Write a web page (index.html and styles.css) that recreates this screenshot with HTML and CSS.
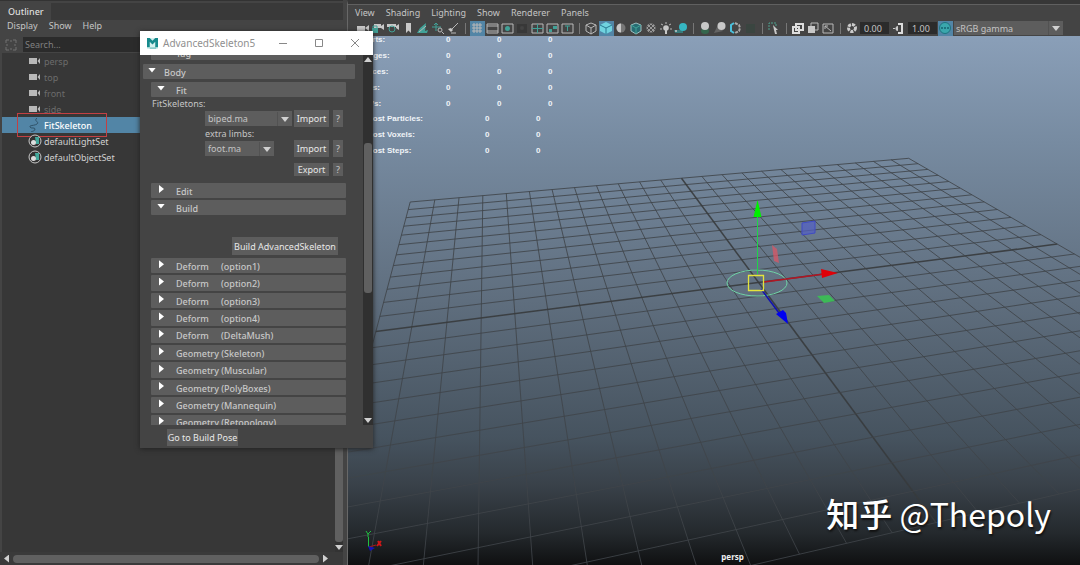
FILE: index.html
```html
<!DOCTYPE html>
<html lang="en">
<head>
<meta charset="utf-8">
<meta name="viewport" content="width=device-width, initial-scale=1">
<title>Outliner and perspective view</title>
<link rel="stylesheet" href="styles.css">
</head>
<body>
<div class="app">
  <aside class="outliner">
    <div class="tabs"><span class="tab">Outliner</span></div>
    <nav class="menu outliner-menu">
      <button>Display</button><button>Show</button><button>Help</button>
    </nav>
    <div class="search-row">
      <svg class="frame-icon" viewBox="0 0 12 12"><path d="M1 4V1h3M8 1h3v3M11 8v3H8M4 11H1V8M2 5v2M10 5v2M5 2h2M5 10h2"/></svg>
      <input class="search" type="text" placeholder="Search..." aria-label="Search">
    </div>
    <div class="tree-area">
      <ul class="tree">
        <li class="node dim"><svg class="node-icon" viewBox="0 0 14 14"><path class="cam" d="M1 4h8v6H1zM9.500 7L12 4v6z"/></svg>persp</li>
        <li class="node dim"><svg class="node-icon" viewBox="0 0 14 14"><path class="cam" d="M1 4h8v6H1zM9.500 7L12 4v6z"/></svg>top</li>
        <li class="node dim"><svg class="node-icon" viewBox="0 0 14 14"><path class="cam" d="M1 4h8v6H1zM9.500 7L12 4v6z"/></svg>front</li>
        <li class="node dim"><svg class="node-icon" viewBox="0 0 14 14"><path class="cam" d="M1 4h8v6H1zM9.500 7L12 4v6z"/></svg>side</li>
        <li class="node selected"><svg class="node-icon" viewBox="0 0 14 14"><path class="curve" d="M9 0C5 3 12 4 9 6S1 7 2 9s5 0 5 2-2 2-4 3"/></svg>FitSkeleton<span class="callout"></span></li>
        <li class="node"><svg class="node-icon" viewBox="0 0 14 14"><circle class="ring" cx="7" cy="7" r="6"/><path d="M7 3h4v7H8z" fill="#42a89b"/><circle cx="5.500" cy="8.500" r="2.500" fill="#ddd"/></svg>defaultLightSet</li>
        <li class="node"><svg class="node-icon" viewBox="0 0 14 14"><circle class="ring" cx="7" cy="7" r="6"/><path d="M7 3h4v7H8z" fill="#42a89b"/><circle cx="5.500" cy="8.500" r="2.500" fill="#ddd"/></svg>defaultObjectSet</li>
      </ul>
      <div class="vscroll"><span class="thumb"></span><i class="tri down"></i></div>
    </div>
    <div class="hscroll"><i class="tri left"></i><span class="thumb"></span><i class="tri right"></i></div>
  </aside>

  <main class="view">
    <nav class="menu view-menu">
      <button>View</button><button>Shading</button><button>Lighting</button><button>Show</button><button>Renderer</button><button>Panels</button>
    </nav>
    <div class="toolbar">
      <button class="tool" aria-label="Select camera"><svg viewBox="0 0 14 14"><path class="f" d="M1 5h8v5H1zM9 7l4-3v6z"/></svg></button>
      <button class="tool" aria-label="Lock camera"><svg viewBox="0 0 14 14"><path class="f" d="M3 3h7v4H3zM10 5l3-2v6l-3-2z"/><path class="t" d="M1 7h6v5H1z"/><path class="ts" d="M2 7V5h4v2"/></svg></button>
      <button class="tool" aria-label="Camera attributes"><svg viewBox="0 0 14 14"><path class="f" d="M1 3h9v3H1zM10 5l3-2v6l-3-2z"/><circle class="ts" cx="6" cy="8" r="3"/></svg></button>
      <button class="tool" aria-label="Bookmarks"><svg viewBox="0 0 14 14"><path class="f" d="M5 2h5v10L7.500 9.500 5 12z"/></svg></button>
      <button class="tool" aria-label="Image plane"><svg viewBox="0 0 14 14"><path class="t" d="M1 12L4 7l6-5-1 8 3-1-1 3z"/><path class="s" d="M3 11l7-6"/></svg></button>
      <button class="tool" aria-label="Pan and zoom"><svg viewBox="0 0 14 14"><path class="ts" d="M1 6h9M5 2v8M3 4l2-2 2 2"/><circle class="s" cx="9" cy="9" r="2"/><path class="s" d="M11 11l2 2"/></svg></button>
      <button class="tool" aria-label="Grease pencil"><svg viewBox="0 0 14 14"><path class="s" d="M12 2L5 9"/><path class="f" d="M2 8l3 3 2-2-2-2z"/><path class="s" d="M5 12h5"/></svg></button>
      <span class="sep"></span>
      <button class="tool on" aria-label="Grid"><svg viewBox="0 0 14 14"><path class="s" d="M2 4h10M2 7h10M2 10h10M4 2v10M7 2v10M10 2v10"/></svg></button>
      <button class="tool" aria-label="Film gate"><svg viewBox="0 0 14 14"><path class="s" d="M2 3h11v9H2zM2 5h11M2 10h11"/></svg></button>
      <button class="tool" aria-label="Resolution gate"><svg viewBox="0 0 14 14"><path class="s" d="M2 3h11v9H2z"/><circle class="t" cx="7.500" cy="7.500" r="2.500"/></svg></button>
      <button class="tool" aria-label="Gate mask" disabled><svg viewBox="0 0 14 14"><path d="M2 3h10v9H2z" fill="#383838"/><circle cx="7" cy="7" r="2" fill="#444"/></svg></button>
      <button class="tool" aria-label="Field chart"><svg viewBox="0 0 14 14"><path class="s" d="M2 3h11v9H2z"/><path class="ts" d="M7.500 3v9M2 7.500h11"/></svg></button>
      <button class="tool" aria-label="Safe action"><svg viewBox="0 0 14 14"><path class="s" d="M2 3h11v9H2z"/><path class="t" d="M8 5h4v3H8zM4 8h3v3H4z"/></svg></button>
      <button class="tool" aria-label="Safe title"><svg viewBox="0 0 14 14"><path class="s" d="M2 3h11v9H2z"/><path class="ts" d="M5 5h5M7.500 5v5"/></svg></button>
      <span class="sep"></span>
      <button class="tool" aria-label="Wireframe"><svg viewBox="0 0 14 14"><path class="s" d="M7 2l5 2v6l-5 3-5-3V4zM2 4l5 3 5-3M7 7v6"/></svg></button>
      <button class="tool on" aria-label="Smooth shade"><svg viewBox="0 0 14 14"><path d="M7 1l6 3v6l-6 3-6-3V4z" fill="#70d3df"/><path d="M1 4l6 3 6-3M7 7v6" fill="none" stroke="#287991"/></svg></button>
      <button class="tool" aria-label="Default material"><svg viewBox="0 0 14 14"><circle cx="7" cy="7" r="4.500" fill="#777"/><path class="f" d="M7 2.500a4.500 4.500 0 000 9z"/></svg></button>
      <button class="tool" aria-label="Wireframe on shaded"><svg viewBox="0 0 14 14"><path d="M7 2l5 2v6l-5 3-5-3V4z" fill="#286c73" stroke="#9cbfc0"/><path class="ts" d="M2 4l5 3 5-3M7 7v6"/></svg></button>
      <button class="tool" aria-label="Textured"><svg viewBox="0 0 14 14"><circle cx="7" cy="7" r="4.500" fill="#999"/><path d="M3 5l6 6M5 3l6 6M3 9l6-6M5 11l6-6" stroke="#4a4a4a"/></svg></button>
      <button class="tool" aria-label="Use all lights"><svg viewBox="0 0 14 14"><circle class="f" cx="7" cy="7" r="2.800"/><path class="f" d="M6 9h2v4H6z"/><path class="s" d="M7 1v2M2 3l2 1M12 3l-2 1M1 8h2M11 8h2"/></svg></button>
      <button class="tool" aria-label="Shadows"><svg viewBox="0 0 14 14"><path d="M0 9h9v3H1z" fill="#397a7b"/><circle cx="9" cy="6" r="4" fill="#36b6c2"/><circle class="f" cx="2" cy="10" r="1"/></svg></button>
      <span class="sep"></span>
      <button class="tool" aria-label="Ambient occlusion"><svg viewBox="0 0 14 14"><ellipse cx="7" cy="10" rx="4" ry="3" fill="#35664d"/><circle class="f" cx="7" cy="5" r="4"/></svg></button>
      <button class="tool" aria-label="Motion blur"><svg viewBox="0 0 14 14"><path d="M1 12l4-8 5 6z" fill="#646464"/><circle class="f" cx="8.500" cy="5" r="4"/></svg></button>
      <button class="tool" aria-label="Anti-aliasing"><svg viewBox="0 0 14 14"><path d="M6 2L3 4v6l3 2" fill="none" stroke="#4bc0dc" stroke-width="2"/><path d="M7 2l4 2 1 3-1 3-4 2" fill="none" stroke="#aaa" stroke-width="2" stroke-dasharray="3 1"/></svg></button>
      <button class="tool" aria-label="Depth of field" disabled><svg viewBox="0 0 14 14"><path d="M3 3h9v9H3z" fill="#3a4540"/></svg></button>
      <span class="sep"></span>
      <button class="tool" aria-label="Isolate select"><svg viewBox="0 0 14 14"><path d="M2 9V2h7v4" fill="none" stroke="#4fa28f" stroke-dasharray="2 1"/><path class="f" d="M6 4l5 5H9l1 4H8L7 9z"/></svg></button>
      <span class="sep"></span>
      <button class="tool" aria-label="X-ray"><svg viewBox="0 0 14 14"><path d="M5 3h7v6H5zM2 6h6v6H2z" fill="none" stroke="#ddd" stroke-width="2"/></svg></button>
      <button class="tool" aria-label="X-ray joints"><svg viewBox="0 0 14 14"><path class="s" d="M5 2h7v7H5z"/><path class="f" d="M2 5h7v7H2z"/></svg></button>
      <button class="tool" aria-label="Exposure view"><svg viewBox="0 0 14 14"><path class="s" d="M2 3h10v9H2zM4 5l6 5M4 8V5h3"/></svg></button>
      <span class="sep"></span>
      <button class="tool" aria-label="Exposure"><svg viewBox="0 0 14 14"><circle cx="7" cy="7" r="3.500" fill="none" stroke="#ccc" stroke-width="3" stroke-dasharray="3 1"/></svg></button>
      <input class="number" type="text" value="0.00" aria-label="Exposure value">
      <button class="tool gamma" aria-label="Gamma"><svg viewBox="0 0 14 14"><path d="M7 3h4v9H7" fill="none" stroke="#ddd" stroke-width="2"/><path class="f" d="M7 5a2 2 0 000 5zM2 7h3v1H2z"/></svg></button>
      <input class="number" type="text" value="1.00" aria-label="Gamma value">
      <button class="tool on color" aria-label="Color management"><svg viewBox="0 0 14 14"><circle cx="7" cy="7" r="5.500" fill="#3aa7ad" stroke="#1e737e"/><path d="M3 7h8" stroke="#1e737e" stroke-width="2" stroke-dasharray="2 1"/></svg></button>
      <select class="drop transform" aria-label="View transform"><option>sRGB gamma</option></select>
    </div>
    <div class="canvas">
      <svg class="scene" viewBox="348 36 732 529" preserveAspectRatio="xMinYMin slice">
        <g id="grid"></g>
        <ellipse cx="757" cy="283" rx="30" ry="13" fill="none" stroke="#6fd2a5"/>
        <g class="gizmo">
          <path d="M757.500 274V216" stroke="#20d24a"/><path d="M757.500 200l4 17h-8z" fill="#00f000"/>
          <path d="M764 282l60-8" stroke="#b21624" stroke-width="1.500"/><path d="M838 273l-17-4 1 9z" fill="#e00008"/>
          <path d="M761 289l18 24" stroke="#1111b0" stroke-width="1.500"/><path d="M788 324l-12-10 7-4 3 3z" fill="#0000f0"/>
          <path d="M748.500 275.500h15v15h-15z" fill="none" stroke="#e4e43c" stroke-width="1.300"/>
          <path d="M802 223l13-2v12l-13 2z" fill="#5260c4" fill-opacity=".7" stroke="#404bc4"/>
          <path d="M772 245l5 4 2 14-5-2z" fill="#d35968" fill-opacity=".8"/>
          <path d="M817 296l12-1 6 6-11 2z" fill="#3db957"/>
        </g>
        <g class="compass">
          <path d="M368.500 547v-10" stroke="#20c040"/><path d="M366 531l2 3 3-3M368 534v3" stroke="#20c040" fill="none"/>
          <path d="M369 547l7-2" stroke="#b01818"/><path d="M377 546l4-5M378 541l3 5" stroke="#d01818" stroke-width="2"/>
          <path d="M368 546l7 2-5 3z" fill="#1414b8"/>
        </g>
      </svg>
      <div class="hud">
        <table class="stats poly">
          <tr><th>Verts:</th><td>0</td><td>0</td><td>0</td></tr>
          <tr><th>Edges:</th><td>0</td><td>0</td><td>0</td></tr>
          <tr><th>Faces:</th><td>0</td><td>0</td><td>0</td></tr>
          <tr><th>Tris:</th><td>0</td><td>0</td><td>0</td></tr>
          <tr><th>UVs:</th><td>0</td><td>0</td><td>0</td></tr>
        </table>
        <table class="stats cost">
          <tr><th>Cost Particles:</th><td>0</td><td>0</td></tr>
          <tr><th>Cost Voxels:</th><td>0</td><td>0</td></tr>
          <tr><th>Cost Steps:</th><td>0</td><td>0</td></tr>
        </table>
      </div>
      <span class="camera-name">persp</span>
      <span class="watermark"><b>知乎</b> @Thepoly</span>
    </div>
  </main>
</div>

<section class="dialog" aria-label="AdvancedSkeleton5">
  <header class="titlebar">
    <svg class="logo" viewBox="0 0 12 12"><path d="M0 0h12v12H0z" fill="#d5f0ee"/><path d="M0 0h3l3 3 3-3h3v10H9V4L6 7 3 4v6H0z" fill="#168a8c"/><path d="M3 11h7" stroke="#4aa"/></svg>
    <h1>AdvancedSkeleton5</h1>
    <button class="win" aria-label="Minimize"><svg viewBox="0 0 10 10"><path d="M1 5.500h8"/></svg></button>
    <button class="win" aria-label="Maximize"><svg viewBox="0 0 10 10"><path d="M1.500 1.500h7v7h-7z"/></svg></button>
    <button class="win" aria-label="Close"><svg viewBox="0 0 10 10"><path d="M1 1l8 8M9 1L1 9"/></svg></button>
  </header>
  <div class="dialog-body">
    <div class="pane">
      <button class="bar sub tag"><i class="tri right"></i>Tag</button>
      <button class="bar body-bar"><i class="tri down"></i>Body</button>
      <button class="bar sub"><i class="tri down"></i>Fit</button>
      <div class="fit">
        <label class="fit-label" for="fit">FitSkeletons:</label>
        <div class="fit-row"><select class="drop biped" id="fit"><option>biped.ma</option></select><button class="push">Import</button><button class="push help">?</button></div>
        <label class="limb-label" for="limb">extra limbs:</label>
        <div class="fit-row"><select class="drop foot" id="limb"><option>foot.ma</option></select><button class="push">Import</button><button class="push help">?</button></div>
        <div class="fit-row export"><button class="push">Export</button><button class="push help">?</button></div>
      </div>
      <button class="bar sub"><i class="tri right"></i>Edit</button>
      <button class="bar sub"><i class="tri down"></i>Build</button>
      <button class="push build">Build AdvancedSkeleton</button>
      <div class="steps">
        <button class="bar sub"><i class="tri right"></i><span class="kind">Deform</span>(option1)</button>
        <button class="bar sub"><i class="tri right"></i><span class="kind">Deform</span>(option2)</button>
        <button class="bar sub"><i class="tri right"></i><span class="kind">Deform</span>(option3)</button>
        <button class="bar sub"><i class="tri right"></i><span class="kind">Deform</span>(option4)</button>
        <button class="bar sub"><i class="tri right"></i><span class="kind">Deform</span>(DeltaMush)</button>
        <button class="bar sub"><i class="tri right"></i>Geometry (Skeleton)</button>
        <button class="bar sub"><i class="tri right"></i>Geometry (Muscular)</button>
        <button class="bar sub"><i class="tri right"></i>Geometry (PolyBoxes)</button>
        <button class="bar sub"><i class="tri right"></i>Geometry (Mannequin)</button>
        <button class="bar sub"><i class="tri right"></i>Geometry (Retopology)</button>
      </div>
    </div>
    <div class="vscroll dialog-scroll"><i class="tri up"></i><span class="thumb"></span><i class="tri down"></i></div>
  </div>
  <footer class="dialog-foot"><button class="push pose">Go to Build Pose</button></footer>
</section>
<script src="grid.js"></script>
</body>
</html>
```

FILE: styles.css
```css
* { box-sizing: border-box; }
body { margin: 0; font-family: "Noto Sans", "Open Sans", sans-serif; font-size: 9px; color: #c4c4c4; background: #444; }
button, input, select { font: inherit; color: inherit; border: 0; margin: 0; padding: 0; background: none; border-radius: 0; }
ul, h1 { margin: 0; padding: 0; list-style: none; }
svg { display: block; }

.app { display: flex; height: 100vh; }
.menu { display: flex; gap: 11px; }
.menu button { line-height: 14px; }

.outliner { width: 343px; flex: none; display: flex; flex-direction: column; background: #444; border-top: 1px solid #333; }
.tabs { background: #393939; height: 17px; margin-top: 2px; }
.tab { display: inline-block; width: 51px; padding-left: 8px; line-height: 17px; background: #444; color: #ddd; font-weight: 500; }
.outliner-menu { padding: 0 7px; height: 16px; align-items: flex-start; }
.outliner-menu button { height: 12px; line-height: 12px; }
.search-row { display: flex; align-items: center; gap: 6px; padding-left: 5px; height: 17px; }
.frame-icon { width: 12px; height: 12px; fill: none; stroke: #707070; }
.search { flex: 1; height: 15px; background: #2b2b2b; padding-left: 2px; }
.search::placeholder { color: #808080; opacity: 1; }
.tree-area { flex: 1; min-height: 0; display: flex; margin-left: 2px; }
.tree { flex: 1; background: #373737; }
.node { position: relative; display: flex; align-items: center; gap: 2px; height: 16px; padding-left: 26px; color: #d0d0d0; }
.node-icon { width: 14px; height: 14px; }
.dim { color: #6c6c6c; }
.cam { fill: #b8b8b8; }
.curve { fill: none; stroke: #2f5268; stroke-width: 1; }
.ring { fill: #333; stroke: #c8c8c8; }
.selected { background: #5285a6; color: #fff; font-weight: 500; }
.callout { position: absolute; left: 15px; top: -4px; width: 90px; height: 24px; border: 1px solid #c34043; }

.vscroll { display: flex; flex-direction: column; align-items: center; width: 8px; background: #333; }
.vscroll .thumb { flex: 1; width: 8px; border-radius: 3px; background: #606060; }
.tree-area .vscroll { gap: 3px; padding-bottom: 2px; }
.hscroll { display: flex; align-items: center; gap: 4px; height: 13px; padding: 0 15px 0 4px; background: #3a3a3a; }
.hscroll .thumb { flex: 1; height: 8px; border-radius: 4px; background: #606060; }
.tri { flex: none; width: 8px; height: 5px; background: #d0d0d0; clip-path: polygon(0 0, 100% 0, 50% 100%); }
.tri.up { clip-path: polygon(50% 0, 100% 100%, 0 100%); }
.tri.right { width: 5px; height: 8px; clip-path: polygon(0 0, 100% 50%, 0 100%); }
.tri.left { width: 5px; height: 8px; clip-path: polygon(100% 0, 100% 100%, 0 50%); }

.view { flex: 1; min-width: 0; display: flex; flex-direction: column; margin-left: 4px; border-top: 4px solid #373737; border-left: 1px solid #686868; }
.view-menu { border-top: 1px solid #606060; padding: 1px 0 0 7px; height: 16px; }
.toolbar { display: flex; align-items: center; height: 16px; padding-left: 8px; }
.tool { width: 15px; height: 15px; flex: none; }
.tool svg { width: 14px; height: 14px; }
.tool.on { background: #5285a6; }
.sep { width: 1px; height: 11px; margin: 0 4px; background: #777; flex: none; }
.f { fill: #c8c8c8; }
.s { fill: none; stroke: #b8b8b8; }
.t { fill: #41a197; }
.ts { fill: none; stroke: #41a197; }
.number { width: 29px; height: 12px; background: #2b2b2b; padding-left: 4px; }
.gamma { margin: 0 2px; }
.color { margin: 0 1px; }
.drop { appearance: none; height: 14px; padding-left: 3px; color: #c4c4c4;
  background: #5d5d5d url("data:image/svg+xml,%3Csvg xmlns='http://www.w3.org/2000/svg' width='15' height='14'%3E%3Cpath d='M0 0V14' stroke='%23484848'/%3E%3Cpath d='M4 5h8l-4 5z' fill='%23d0d0d0'/%3E%3C/svg%3E") no-repeat right center; }
.transform { width: 109px; padding-left: 2px; }

.canvas { position: relative; flex: 1; min-height: 0; overflow: hidden;
  background: linear-gradient(#8a9fb8 0%, #778ba1 20%, #5f6e7e 50%, #46535f 76%, #394149 85%, #24292d 94%, #0f1011 100%); }
.scene { position: absolute; inset: 0; width: 100%; height: 100%; }
.grid-line { stroke: #40454a; stroke-width: 1; opacity: .85; }
.grid-axis { stroke: #383b3d; stroke-width: 1.5; opacity: .9; }
.hud { position: absolute; left: 15px; top: -5px; font: bold 8px "Liberation Sans", Arial, sans-serif; color: #f0f4f8; }
.stats { border-collapse: collapse; table-layout: fixed; }
.stats th, .stats td { padding: 0; height: 16px; text-align: left; font-weight: bold; width: 51px; white-space: nowrap; }
.stats .first, .poly th { width: 83px; }
.cost { margin-top: -1px; }
.cost .first, .cost th { width: 122px; padding-left: 4px; }
.camera-name { position: absolute; left: 51%; bottom: 3px; font-weight: 700; font-size: 8px; color: #f0f0f0; }
.watermark { position: absolute; right: 29px; bottom: 28px; font: 32px/48px "Noto Sans CJK SC", sans-serif; color: #fff; text-shadow: 1px 2px 2px #111; }
.watermark b { font-weight: 500; font-size: 33px; }

.dialog { position: absolute; left: 140px; top: 31px; width: 233px; background: #444; box-shadow: 0 1px 5px #222; }
.titlebar { display: flex; align-items: center; height: 24px; background: #fff; color: #8f8f8f; padding-left: 7px; }
.logo { width: 11px; height: 11px; margin-right: 5px; }
.titlebar h1 { flex: 1; font-size: 10px; font-weight: 400; }
.win { width: 36px; height: 24px; display: grid; place-items: center; }
.win svg { width: 10px; height: 10px; fill: none; stroke: #888; }
.dialog-body { display: flex; height: 370px; }
.pane { flex: 1; overflow: hidden; display: flex; flex-direction: column; gap: 2px; padding: 0 8px 0 3px; }
.bar { display: flex; align-items: center; flex: none; height: 15px; padding-top: 1px; background: #5d5d5d; color: #c8c8c8; font-weight: 500; border-radius: 1px; text-align: left; }
.bar .tri { background: #fff; }
.bar .tri.down { margin: -4px 8px 0 5px; }
.bar .tri.right { margin: -4px 10px 0 6px; }
.sub { margin: 0 9px 0 8px; padding-left: 1px; }
.sub .tri.down { margin: -4px 11px 0 5px; }
.sub .tri.right { margin: -4px 12px 0 7px; }
.tag { margin-top: -10px; }
.body-bar { margin: 2px 0 1px; }
.kind { width: 45px; }
.fit { display: flex; flex-direction: column; flex: none; height: 82px; padding-left: 9px; }
.fit-label { line-height: 12px; margin-top: -1px; }
.fit-row { display: flex; align-items: center; gap: 4px; padding-left: 53px; }
.limb-label { padding-left: 53px; line-height: 13px; }
.biped { width: 87px; margin-right: -2px; height: 15px; }
.foot { width: 69px; margin-right: 16px; height: 15px; }
.push { flex: none; background: #5d5d5d; color: #e8e8e8; width: 35px; height: 17px; }
.help { width: 10px; color: #c8c8c8; }
.export { padding-left: 142px; margin-top: 6px; }
.export .push { height: 13px; line-height: 13px; }
.build { align-self: flex-end; width: 106px; height: 18px; margin: 20px 17px 1px 0; }
.steps { display: flex; flex-direction: column; flex: none; height: 172px; gap: 2px; }
.steps .bar { flex: 1; }
.dialog-scroll { width: 10px; padding: 2px 0; gap: 4px; background: #303030; justify-content: space-between; }
.dialog-scroll .thumb { flex: none; height: 150px; margin: 77px 0 auto; }
.dialog-foot { padding: 4px 27px; height: 23px; }
.pose { width: 71px; height: 17px; }
```

FILE: grid.js
```js
// Projects a 24 x 24 ground grid into view space and draws its lines.
const HALF = 12;
const project = (x, z) => {
  const u = x / HALF, v = z / HALF;
  const w = 1 + 0.1233 * u - 0.3949 * v;
  return [(429 * u - 192.1 * v + 758.5) / w, (-8.25 * u + 33.8 * v + 282.4) / w];
};
const grid = document.getElementById("grid");
for (let i = -HALF; i <= HALF; i++) {
  for (const [a, b] of [[[i, -HALF], [i, HALF]], [[-HALF, i], [HALF, i]]]) {
    const [x1, y1] = project(...a), [x2, y2] = project(...b);
    const line = document.createElementNS("http://www.w3.org/2000/svg", "line");
    Object.entries({ x1, y1, x2, y2 }).forEach(([k, n]) => line.setAttribute(k, n.toFixed(1)));
    line.setAttribute("class", i === 0 ? "grid-axis" : "grid-line");
    grid.append(line);
  }
}
```
